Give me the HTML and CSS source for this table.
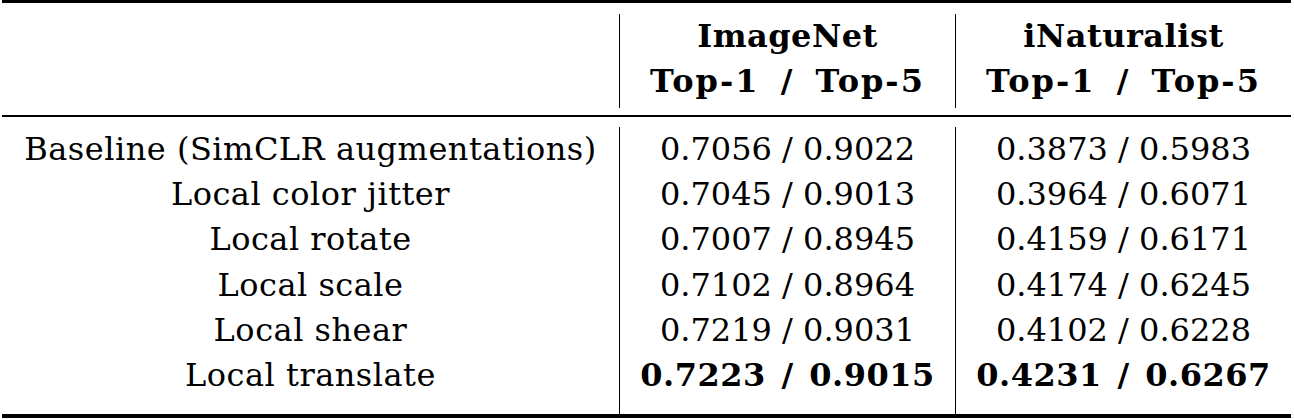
FILE: index.html
```html
<!DOCTYPE html>
<html lang="en">
<head>
    <meta charset="UTF-8">
    <title>Local augmentations</title>
    <link rel="stylesheet" href="styles.css">
</head>
<body>
    <div class="table">
        <div class="head">
            <div class="cell label"></div>
            <div class="cell col title"><span class="name">ImageNet</span><br>Top-1 / Top-5</div>
            <div class="cell col title"><span class="name">iNaturalist</span><br>Top-1 / Top-5</div>
        </div>
        <div class="midrule"></div>
        <div class="body">
            <div class="cell label">
                <div>Baseline (SimCLR augmentations)</div>
                <div>Local color jitter</div>
                <div>Local rotate</div>
                <div>Local scale</div>
                <div>Local shear</div>
                <div>Local translate</div>
            </div>
            <div class="cell col num">
                <div>0.7056 / 0.9022</div>
                <div>0.7045 / 0.9013</div>
                <div>0.7007 / 0.8945</div>
                <div>0.7102 / 0.8964</div>
                <div>0.7219 / 0.9031</div>
                <div class="best">0.7223 / 0.9015</div>
            </div>
            <div class="cell col num">
                <div>0.3873 / 0.5983</div>
                <div>0.3964 / 0.6071</div>
                <div>0.4159 / 0.6171</div>
                <div>0.4174 / 0.6245</div>
                <div>0.4102 / 0.6228</div>
                <div class="best">0.4231 / 0.6267</div>
            </div>
        </div>
    </div>
</body>
</html>
```

FILE: styles.css
```css
* {
    box-sizing: border-box;
}
body {
    margin: 0;
    background-color: #fff;
    color: #000;
    font-family: "DejaVu Serif", "Liberation Serif", serif;
    font-size: 32px;
}

.table {
    width: 1289px;
    margin-left: 2px;
    border-top: 3px solid #000;
    border-bottom: 4px solid #000;
}

.head, .body {
    display: grid;
    grid-template-columns: 617px 336px 336px;
}

.head {
    padding-top: 11px;
}

.head .cell {
    height: 94px;
    line-height: 45px;
}

.body .cell {
    padding-bottom: 16px;
    line-height: 45.2px;
}

.cell {
    text-align: center;
}

.col {
    border-left: 1px solid #000;
}

.label {
    letter-spacing: 0.5px;
}

.title {
    font-weight: bold;
    letter-spacing: 2px;
    word-spacing: 8px;
}

.title .name {
    letter-spacing: 0.5px;
}

.best {
    font-weight: bold;
    letter-spacing: 0.5px;
    word-spacing: 4px;
}

.midrule {
    height: 2px;
    margin: 7px 0 10px 0;
    background-color: #000;
}
```
